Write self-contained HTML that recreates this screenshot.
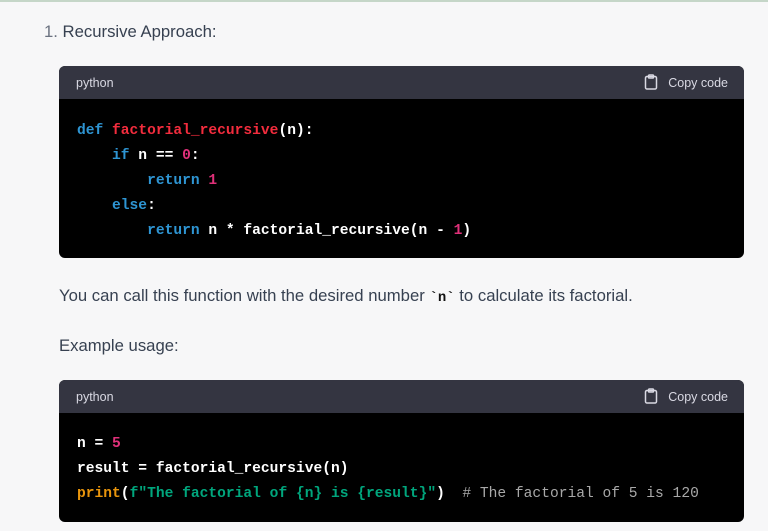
<!DOCTYPE html>
<html><head><meta charset="utf-8"><style>
html,body{margin:0;padding:0}
body{width:768px;height:531px;background:#f7f7f8;position:relative;overflow:hidden;font-family:"Liberation Sans",sans-serif;color:#374151}
.top{position:absolute;left:0;top:0;width:768px;height:2px;background:#c5d6c8}
.t{position:absolute;font-size:16.7px;white-space:nowrap}
.blk{position:absolute;left:59px;width:685px;background:#000;border-radius:6px;overflow:hidden}
.hd{height:33px;background:#343541;color:#d9d9e3;font-size:12.5px;position:relative}
.hd .l{position:absolute;left:17px;top:10px}
.hd .r{position:absolute;right:16px;top:10px}
.hd svg{position:absolute;right:86px;top:8px}
pre{margin:0;position:absolute;left:18px;font-family:"Liberation Mono",monospace;font-size:14.6px;line-height:25px;color:#fff;font-weight:bold}
.k{color:#2e95d3}.f{color:#f22c3d}.n{color:#df3079}.s{color:#00a67d}.c{color:#a8a8a8;font-weight:normal}
code{font-family:"Liberation Mono",monospace;font-weight:bold;font-size:14px;color:#111}
</style></head><body>
<div class="top"></div>
<div class="t" style="left:44px;top:22px"><span style="color:#6b7280">1.</span> Recursive Approach:</div>
<div class="blk" style="top:66px;height:192px">
<div class="hd"><span class="l">python</span><svg width="14" height="16" viewBox="0 0 14 16" fill="none" stroke="#d9d9e3" stroke-width="1.5"><rect x="1.5" y="2.5" width="11" height="12.5" rx="1.5"/><rect x="4.5" y="1" width="5" height="3" rx="0.8"/></svg><span class="r">Copy code</span></div>
<pre style="top:53px"><span class="k">def</span> <span class="f">factorial_recursive</span>(n):
    <span class="k">if</span> n == <span class="n">0</span>:
        <span class="k">return</span> <span class="n">1</span>
    <span class="k">else</span>:
        <span class="k">return</span> n * factorial_recursive(n - <span class="n">1</span>)</pre>
</div>
<div class="t" style="left:59px;top:286px">You can call this function with the desired number <code>`n`</code> to calculate its factorial.</div>
<div class="t" style="left:59px;top:336px">Example usage:</div>
<div class="blk" style="top:380px;height:142px">
<div class="hd"><span class="l">python</span><svg width="14" height="16" viewBox="0 0 14 16" fill="none" stroke="#d9d9e3" stroke-width="1.5"><rect x="1.5" y="2.5" width="11" height="12.5" rx="1.5"/><rect x="4.5" y="1" width="5" height="3" rx="0.8"/></svg><span class="r">Copy code</span></div>
<pre style="top:52px">n = <span class="n">5</span>
result = factorial_recursive(n)
<span class="k" style="color:#e9950c">print</span>(<span class="s">f"The factorial of {n} is {result}"</span>)  <span class="c"># The factorial of 5 is 120</span></pre>
</div>
</body></html>
